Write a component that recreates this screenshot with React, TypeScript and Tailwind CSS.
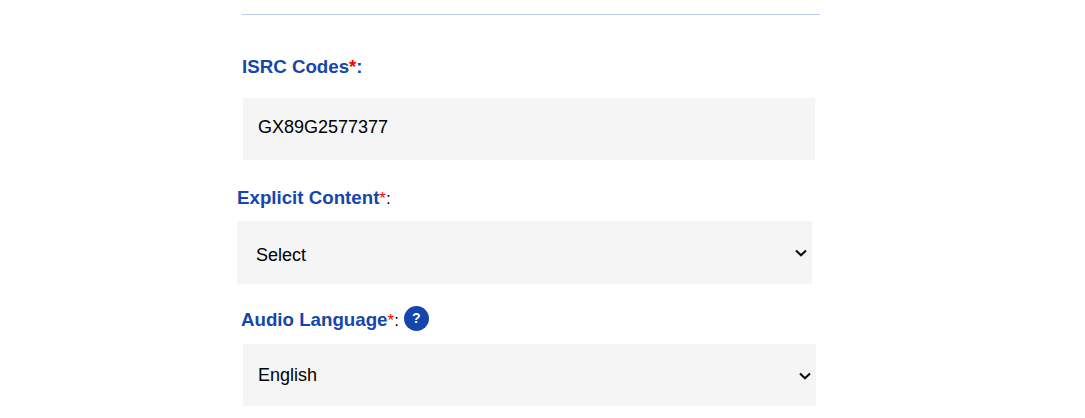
function Chevron({ className }: { className: string }) {
  return (
    <svg
      viewBox="0 0 12 8"
      fill="none"
      stroke="#111"
      strokeWidth="2.2"
      className={`pointer-events-none absolute h-[8px] w-[12px] ${className}`}
    >
      <path d="M1 1.5 6 6.2 11 1.5" />
    </svg>
  );
}

export default function App() {
  return (
    <div
      className="h-[418px] overflow-hidden bg-white pl-[237px] text-black"
      style={{ fontFamily: '"Liberation Sans", Arial, sans-serif' }}
    >
      <div className="w-[583px] pt-[14px]">
        <hr className="ml-[5px] w-[578px] border-0 border-t border-[#bccbeb]" />

        {/* ISRC */}
        <div className="ml-[5px] mt-[42px] text-[18.72px] font-bold leading-5 text-[#1546ad]">
          ISRC Codes<span className="text-[#ff0000]">*</span>:
        </div>
        <input
          readOnly
          value="GX89G2577377"
          className="ml-[6px] mt-[21px] block h-[62px] w-[572px] bg-[#f5f5f5] pb-[4px] pl-[15px] text-[18px] text-black outline-none"
        />

        {/* Explicit content */}
        <div className="mt-[27px] flex h-5 items-center text-[17px] text-black">
          <span className="pt-[2px]">
            <span className="text-[18.72px] font-bold text-[#1546ad]">Explicit Content</span>
            <span className="text-[#ff0000]">*</span>:
          </span>
        </div>
        <div className="relative mt-[14px] w-[575px]">
          <select className="block h-[63px] w-full appearance-none bg-[#f5f5f5] pl-[19px] pt-[5px] text-[18px] text-black outline-none">
            <option>Select</option>
          </select>
          <Chevron className="right-[5px] top-[28px]" />
        </div>

        {/* Audio language */}
        <div className="ml-[4px] mt-[22px] flex h-[25px] items-center text-[17px] text-black">
          <span className="pt-[3px]">
            <span className="text-[18.72px] font-bold text-[#1546ad]">Audio Language</span>
            <span className="text-[#ff0000]">*</span>:
          </span>
          <span className="ml-[5px] flex h-[25px] w-[25px] items-center justify-center rounded-full bg-[#1546ad] text-[14px] font-bold text-white">
            ?
          </span>
        </div>
        <div className="relative ml-[6px] mt-[13px] w-[573px]">
          <select className="block h-[62px] w-full appearance-none bg-[#f5f5f5] pl-[15px] pt-[1px] text-[18px] text-black outline-none">
            <option>English</option>
          </select>
          <Chevron className="right-[5px] top-[28px]" />
        </div>
      </div>
    </div>
  );
}
